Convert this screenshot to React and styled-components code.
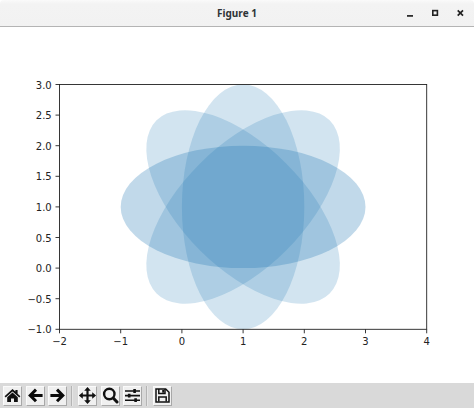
import React from "react";
import styled, { createGlobalStyle } from "styled-components";

const X_TICKS = [-2, -1, 0, 1, 2, 3, 4];
const Y_TICKS = [3, 2.5, 2, 1.5, 1, 0.5, 0, -0.5, -1];

const UNIT = 61.2;
const toX = (v) => 59.5 + (v + 2) * UNIT;
const toY = (v) => 57.5 + (3 - v) * UNIT;
const minus = (text) => text.replace("-", "\u2212");

const ELLIPSES = [
  { angle: 0, alpha: 0.28 },
  { angle: 45, alpha: 0.2 },
  { angle: 90, alpha: 0.2 },
  { angle: 135, alpha: 0.2 },
];

const Plot = function() {
  const cx = toX(1);
  const cy = toY(1);

  return (
    <Canvas width="474" height="356" viewBox="0 0 474 356">
      {ELLIPSES.map(({ angle, alpha }) => (
        <ellipse
          key={angle}
          cx={cx}
          cy={cy}
          rx={UNIT * 2}
          ry={UNIT}
          fill="#1f77b4"
          fillOpacity={alpha}
          transform={`rotate(${-angle} ${cx} ${cy})`}
        />
      ))}
      <rect x={toX(-2)} y={toY(3)} width={UNIT * 6} height={UNIT * 4} fill="none" stroke="#222" strokeWidth="0.9" />
      {X_TICKS.map((v) => (
        <g key={v}>
          <line x1={toX(v)} x2={toX(v)} y1={toY(-1)} y2={toY(-1) + 4} stroke="#222" strokeWidth="0.9" />
          <TickLabel x={toX(v)} y={toY(-1) + 15.4} textAnchor="middle">{minus(String(v))}</TickLabel>
        </g>
      ))}
      {Y_TICKS.map((v) => (
        <g key={v}>
          <line x1={toX(-2) - 4} x2={toX(-2)} y1={toY(v)} y2={toY(v)} stroke="#222" strokeWidth="0.9" />
          <TickLabel x={toX(-2) - 7.8} y={toY(v) + 4} textAnchor="end">{minus(v.toFixed(1))}</TickLabel>
        </g>
      ))}
    </Canvas>
  );
};

const HomeIcon = () => (
  <svg width="17" height="17" viewBox="0 0 17 17" fill="#111">
    <path d="M8.5 1.9 L11.4 4.6 V3 H13.6 V6.7 L16.4 9.3 L15.3 10.6 L8.5 4.5 L1.7 10.6 L0.6 9.3 Z" />
    <path d="M3.2 10.2 L8.5 5.4 L13.8 10.2 V15 H10 V11.4 H7 V15 H3.2 Z" />
  </svg>
);

const ArrowIcon = ({ flip }) => (
  <svg width="17" height="17" viewBox="0 0 17 17" fill="none" stroke="#0a0a0a" strokeWidth="3">
    <g transform={flip ? "matrix(-1 0 0 1 17 0)" : undefined}>
      <path d="M9 2.6 L3.2 8.4 L9 14.2 M3.4 8.4 H15.6" />
    </g>
  </svg>
);

const MoveIcon = () => (
  <svg width="19" height="19" viewBox="0 0 19 19" fill="#111">
    <path d="M8.4 4 H10.6 V8.4 H15 V10.6 H10.6 V15 H8.4 V10.6 H4 V8.4 H8.4 Z" />
    <path d="M9.5 0.9 L12.8 4.8 H6.2 Z M9.5 18.1 L12.8 14.2 H6.2 Z M0.9 9.5 L4.8 6.2 V12.8 Z M18.1 9.5 L14.2 6.2 V12.8 Z" />
  </svg>
);

const SearchIcon = () => (
  <svg width="17" height="17" viewBox="0 0 17 17" fill="none" stroke="#111">
    <circle cx="7.3" cy="7" r="5.2" strokeWidth="2.4" />
    <path d="M11.2 11 L15 15" strokeWidth="3" strokeLinecap="round" />
  </svg>
);

const SlidersIcon = () => (
  <svg width="17" height="17" viewBox="0 0 17 17" stroke="#111" fill="none">
    <path d="M1 4 H16 M1 8.6 H16 M1 13.2 H16" strokeWidth="1.6" />
    <path d="M10.6 2.1 V5.9 M5.2 6.7 V10.5 M11.6 11.3 V15.1" strokeWidth="2.6" />
  </svg>
);

const SaveIcon = () => (
  <svg width="17" height="17" viewBox="0 0 17 17" fill="none" stroke="#111" strokeWidth="1.5">
    <path d="M2 2 H11.7 L15 5.2 V14.9 H2 Z" />
    <path d="M4.8 14.5 V10 H12.2 V14.5 M4.8 2 V6.6 H11 V2" />
    <path d="M9.2 3 V5.7" strokeWidth="2" />
  </svg>
);

export default function App() {
  return (
    <>
      <GlobalStyle />
      <Window>
        <TitleBar>
          <Title>Figure 1</Title>
          <WindowControls>
            <svg width="8" height="8" viewBox="0 0 8 8"><path d="M1 6.9 H7" stroke="#222" strokeWidth="1.7" /></svg>
            <svg width="8" height="8" viewBox="0 0 8 8"><rect x="1.8" y="1.6" width="4.6" height="4.6" fill="none" stroke="#222" strokeWidth="1.6" /></svg>
            <svg width="8" height="8" viewBox="0 0 8 8"><path d="M1.7 1.4 L7 6.7 M7 1.4 L1.7 6.7" stroke="#222" strokeWidth="1.7" /></svg>
          </WindowControls>
        </TitleBar>
        <Plot />
        <Toolbar>
          <ButtonGroup>
            <ToolButton title="Home"><HomeIcon /></ToolButton>
            <ToolButton title="Back"><ArrowIcon /></ToolButton>
            <ToolButton title="Forward"><ArrowIcon flip /></ToolButton>
          </ButtonGroup>
          <Separator />
          <ButtonGroup>
            <ToolButton title="Pan"><MoveIcon /></ToolButton>
            <ToolButton title="Zoom"><SearchIcon /></ToolButton>
            <ToolButton title="Subplots"><SlidersIcon /></ToolButton>
          </ButtonGroup>
          <Separator />
          <ToolButton title="Save"><SaveIcon /></ToolButton>
        </Toolbar>
      </Window>
    </>
  );
}

const GlobalStyle = createGlobalStyle`
  body {
    margin: 0;
    background: #fff;
  }
`

const Window = styled.div`
  display: flex;
  flex-direction: column;
  width: 474px;
  height: 408px;
  overflow: hidden;
  background: #fff;
`

const TitleBar = styled.div`
  display: grid;
  grid-template-columns: 1fr auto 1fr;
  align-items: center;
  flex: none;
  height: 27px;
  box-sizing: border-box;
  border-bottom: 1px solid #b4b4b4;
  border-radius: 4px 4px 0 0;
  background: linear-gradient(#fafafa, #f3f3f3 4px, #f2f2f2);
`

const Title = styled.span`
  grid-column: 2;
  font: bold 10px/14px "Noto Sans", sans-serif;
  color: #2e3436;
`

const WindowControls = styled.div`
  display: flex;
  justify-content: flex-end;
  gap: 17px;
  padding-right: 10px;
`

const Canvas = styled.svg`
  display: block;
  flex: none;
`

const TickLabel = styled.text`
  font-family: "DejaVu Sans", sans-serif;
  font-size: 10px;
  fill: #222;
`

const Toolbar = styled.div`
  display: flex;
  align-items: center;
  flex: 1;
  box-sizing: border-box;
  padding: 0 3.3px;
  background: #d9d9d9;
`

const ButtonGroup = styled.div`
  display: flex;
  gap: 3.4px;
`

const ToolButton = styled.button`
  display: flex;
  align-items: center;
  justify-content: center;
  width: 19px;
  height: 20px;
  padding: 0;
  border: 1px solid;
  border-color: #fafafa #a8a8a8 #a8a8a8 #fafafa;
  background: #f0f0f0;

  svg {
    flex: none;
  }
`

const Separator = styled.div`
  width: 1px;
  height: 20px;
  margin: 0 5.2px 0 4px;
  border-left: 1px solid #b4b4b4;
  background: #e6e6e6;
`
